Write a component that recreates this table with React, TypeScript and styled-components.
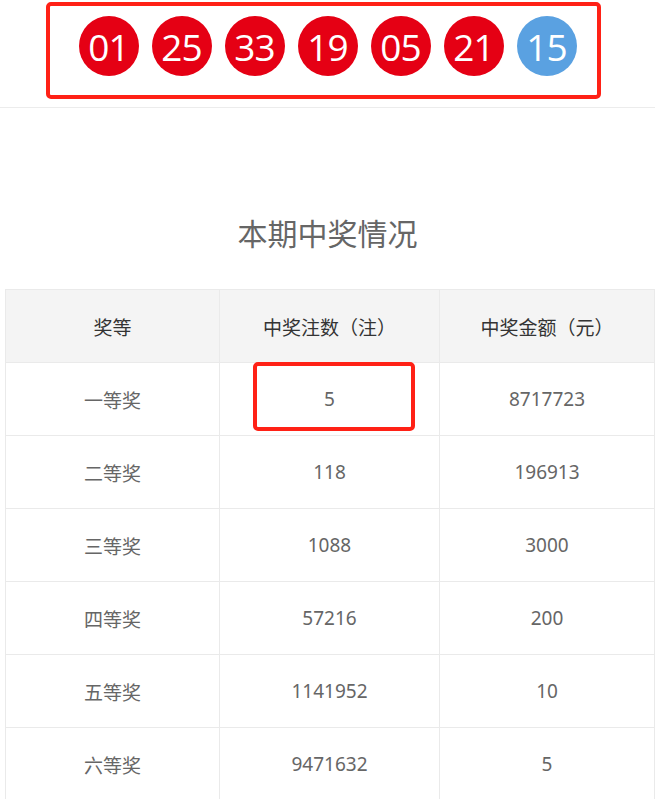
import styled, { createGlobalStyle } from "styled-components";

const GlobalStyle = createGlobalStyle`
  body {
    margin: 0;
    background: #ffffff;
    font-family: "Noto Sans", "Noto Sans CJK SC", sans-serif;
  }
`;

const Page = styled.div`
  width: 655px;
`;

const BallSection = styled.section`
  position: relative;
  height: 108px;
  border-bottom: 1px solid #ececec;
  display: flex;
  justify-content: center;
  padding-top: 16px;
  box-sizing: border-box;
`;

const BallRow = styled.div`
  display: flex;
  gap: 13px;
`;

const Ball = styled.span<{ $blue?: boolean }>`
  width: 60px;
  height: 60px;
  border-radius: 50%;
  background: ${(p) => (p.$blue ? "#5aa1e1" : "#e50014")};
  color: #ffffff;
  display: flex;
  align-items: center;
  justify-content: center;
  font-family: "Open Sans", "Noto Sans", sans-serif;
  font-size: 37px;
  letter-spacing: -1px;
`;

const Marker = styled.div`
  position: absolute;
  left: 46px;
  top: 2px;
  width: 555px;
  height: 97px;
  box-sizing: border-box;
  border: 4px solid #ff2116;
  border-radius: 5px;
`;

const Title = styled.h2`
  margin: 104px 0 37px;
  text-align: center;
  font-size: 30px;
  line-height: 40px;
  font-weight: 400;
  color: #666666;
  font-family: "Noto Sans CJK SC", sans-serif;
`;

const Table = styled.table`
  margin-left: 5px;
  width: 649px;
  border-collapse: collapse;
  table-layout: fixed;
`;

const HeadCell = styled.th`
  height: 72px;
  padding: 0;
  background: #f4f4f4;
  border: 1px solid #eaeaea;
  font-weight: 400;
  font-size: 19px;
  color: #333333;
  font-family: "Noto Sans CJK SC", sans-serif;
`;

const Cell = styled.td<{ $cjk?: boolean }>`
  position: relative;
  height: 72px;
  padding: 0;
  border: 1px solid #eaeaea;
  text-align: center;
  font-size: 19px;
  color: #666666;
  font-family: ${(p) =>
    p.$cjk ? '"Noto Sans CJK SC", sans-serif' : '"Noto Sans", sans-serif'};
`;

const CellMarker = styled.span`
  position: absolute;
  left: 33px;
  top: -1px;
  width: 162px;
  height: 69px;
  box-sizing: border-box;
  border: 4px solid #ff2116;
  border-radius: 5px;
`;

const reds = ["01", "25", "33", "19", "05", "21"];
const blue = "15";

const prizes = [
  { level: "一等奖", count: "5", amount: "8717723" },
  { level: "二等奖", count: "118", amount: "196913" },
  { level: "三等奖", count: "1088", amount: "3000" },
  { level: "四等奖", count: "57216", amount: "200" },
  { level: "五等奖", count: "1141952", amount: "10" },
  { level: "六等奖", count: "9471632", amount: "5" },
];

export default function App() {
  return (
    <Page>
      <GlobalStyle />
      <BallSection>
        <BallRow>
          {reds.map((n) => (
            <Ball key={n}>{n}</Ball>
          ))}
          <Ball $blue>{blue}</Ball>
        </BallRow>
        <Marker />
      </BallSection>

      <Title>本期中奖情况</Title>

      <Table>
        <colgroup>
          <col style={{ width: 214 }} />
          <col style={{ width: 220 }} />
          <col style={{ width: 215 }} />
        </colgroup>
        <thead>
          <tr>
            <HeadCell>奖等</HeadCell>
            <HeadCell>中奖注数（注）</HeadCell>
            <HeadCell>中奖金额（元）</HeadCell>
          </tr>
        </thead>
        <tbody>
          {prizes.map((p, i) => (
            <tr key={p.level}>
              <Cell $cjk>{p.level}</Cell>
              <Cell>
                {p.count}
                {i === 0 && <CellMarker />}
              </Cell>
              <Cell>{p.amount}</Cell>
            </tr>
          ))}
        </tbody>
      </Table>
    </Page>
  );
}
